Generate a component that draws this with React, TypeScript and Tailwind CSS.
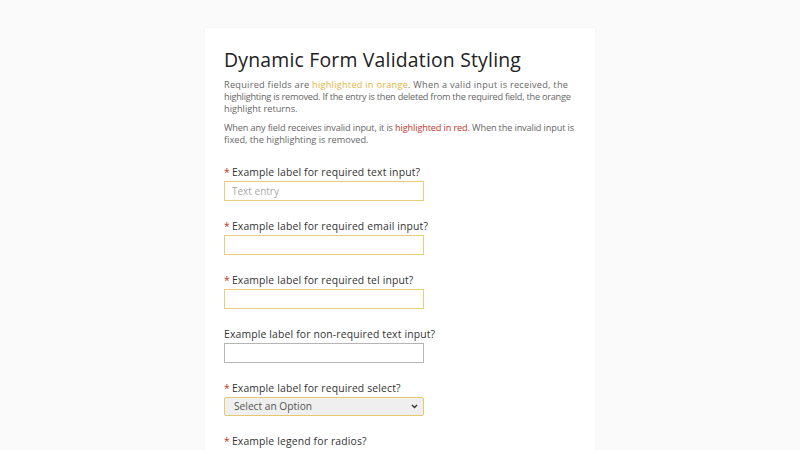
import React from 'react';

const font = { fontFamily: '"Open Sans", "Noto Sans", sans-serif' };

const Req = () => <span className="text-[#c0392b] mr-[2px]">*</span>;

const Field = ({ label, required, children }: { label: string; required?: boolean; children: React.ReactNode }) => (
  <div className="mb-[18px]">
    <label className="block text-[10.4px] leading-[14px] text-[#333] mb-[2px] tracking-[0.15px]">
      {required && <Req />}
      {label}
    </label>
    {children}
  </div>
);

export default function App() {
  return (
    <div className="h-[450px] overflow-hidden bg-[#fafafa] pt-[28px]" style={font}>
      <div className="w-[390px] mx-auto bg-white shadow-[0_0_2px_rgba(0,0,0,0.06)] pl-[19px] pr-[17px] pt-[18px] pb-4">
        <h1 className="text-[19.4px] leading-[28px] text-[#222] tracking-[0.2px] mb-[5px]">Dynamic Form Validation Styling</h1>
        <p className="text-[9.2px] leading-[12px] text-[#666] mb-[7px]">
          <span className="block whitespace-nowrap tracking-[0.25px]">
            Required fields are <span className="text-[#e3b540]">highlighted in orange</span>. When a valid input is received, the
          </span>
          <span className="block whitespace-nowrap tracking-[-0.25px]">
            highlighting is removed. If the entry is then deleted from the required field, the orange
          </span>
          <span className="block whitespace-nowrap">highlight returns.</span>
        </p>
        <p className="text-[9.2px] leading-[12px] text-[#666] mb-[19px]">
          <span className="block whitespace-nowrap tracking-[-0.15px]">
            When any field receives invalid input, it is <span className="text-[#c0392b]">highlighted in red</span>. When the invalid input is
          </span>
          <span className="block whitespace-nowrap">fixed, the highlighting is removed.</span>
        </p>
        <Field label="Example label for required text input?" required>
          <input
            placeholder="Text entry"
            className="block w-[200px] h-[20px] border border-[#e8cf7d] px-[7px] text-[10px] placeholder:text-[#aaa] outline-none"
          />
        </Field>
        <Field label="Example label for required email input?" required>
          <input className="block w-[200px] h-[20px] border border-[#e8cf7d] px-[7px] text-[10px] outline-none" />
        </Field>
        <Field label="Example label for required tel input?" required>
          <input className="block w-[200px] h-[20px] border border-[#e8cf7d] px-[7px] text-[10px] outline-none" />
        </Field>
        <Field label="Example label for non-required text input?">
          <input className="block w-[200px] h-[20px] border border-[#b5b5b5] px-[7px] text-[10px] outline-none" />
        </Field>
        <Field label="Example label for required select?" required>
          <div className="relative w-[200px] h-[19px] border border-[#e6c96f] bg-[#efefef] rounded-[2px] flex items-center px-[9px] text-[10.2px] text-[#555]">
            Select an Option
            <svg className="absolute right-[5px] top-[6px]" width="7" height="5" viewBox="0 0 7 5">
              <path d="M1 1l2.5 2.5L6 1" fill="none" stroke="#333" strokeWidth="1.4" />
            </svg>
          </div>
        </Field>
        <div className="text-[10.4px] leading-[14px] text-[#333] tracking-[0.15px]">
          <Req />Example legend for radios?
        </div>
      </div>
    </div>
  );
}
